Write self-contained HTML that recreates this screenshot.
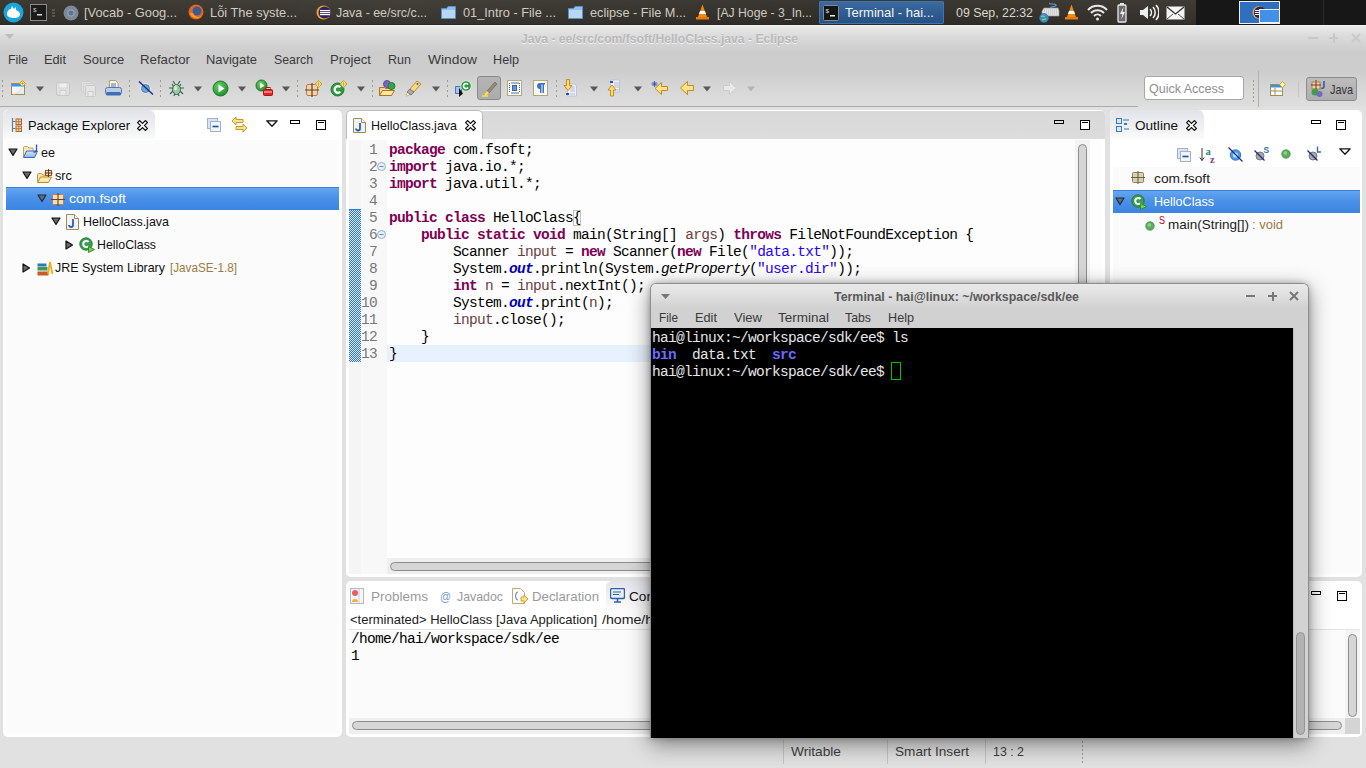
<!DOCTYPE html>
<html><head><meta charset="utf-8"><style>
html,body{margin:0;padding:0;width:1366px;height:768px;overflow:hidden;background:#e1e1e1;}
body>div,body>svg{position:absolute;}
.t{position:absolute;white-space:pre;line-height:1;transform-origin:0 0;}
</style></head><body>
<div style="left:0px;top:0px;width:1366px;height:25px;background:linear-gradient(90deg,rgba(255,255,255,0) 0%,rgba(255,255,255,0.03) 30%,rgba(0,0,0,0.05) 60%,rgba(255,255,255,0.02) 100%),linear-gradient(180deg,#3d3933 0%,#37332d 50%,#302c27 100%);"></div>
<div style="left:0px;top:24px;width:1366px;height:1px;background:#2a2824;"></div>
<div style="left:1196px;top:0px;width:170px;height:25px;background:#171717;"></div>
<div style="left:1323px;top:0px;width:1px;height:25px;background:#2a2a2a;"></div>
<div style="left:0px;top:25px;width:1366px;height:1px;background:#f4f4f4;"></div>
<svg style="left:3px;top:2px;" width="21" height="21" viewBox="0 0 21 21"><circle cx="10.5" cy="10.5" r="10" fill="#19a6dc"/><path d="M4 12c0-3 2-5 4-5l1-3 2 3 2-2 0 3c2 1 4 2 4 4 0 3-3 4-6 4s-7-1-7-4z" fill="#fff"/></svg>
<svg style="left:30px;top:4px;" width="17" height="17" viewBox="0 0 17 17"><rect x="0.5" y="0.5" width="16" height="16" fill="#1b1b1b" stroke="#8a8a8a"/><text x="3" y="8" font-size="6" fill="#ddd" font-family="Liberation Mono">$</text><rect x="7" y="10" width="5" height="1.5" fill="#ddd"/></svg>
<div style="left:52px;top:9px;width:3px;height:2px;background:#555;"></div>
<div style="left:52px;top:12px;width:3px;height:2px;background:#555;"></div>
<div style="left:52px;top:15px;width:3px;height:2px;background:#555;"></div>
<svg style="left:63px;top:5px;" width="16" height="16" viewBox="0 0 16 16"><circle cx="8" cy="8" r="7.5" fill="#7a8a98"/><circle cx="8" cy="8" r="3.2" fill="#5a7494" stroke="#aab" stroke-width="1"/></svg>
<div class="t" style="left:84px;top:6.00px;font-family:'Liberation Sans', sans-serif;font-size:13px;font-weight:normal;font-style:normal;color:#cfcac2;transform:scaleX(0.9899);">[Vocab - Goog...</div>
<svg style="left:188px;top:4px;" width="16" height="16" viewBox="0 0 16 16"><circle cx="8" cy="8" r="7.5" fill="#e8641a"/><circle cx="9" cy="7" r="4.5" fill="#3c5a9a"/><path d="M2 9c1 5 8 7 12 3-3 2-8 1-9-3z" fill="#f7a020"/></svg>
<div class="t" style="left:210px;top:6.00px;font-family:'Liberation Sans', sans-serif;font-size:13px;font-weight:normal;font-style:normal;color:#cfcac2;transform:scaleX(0.9895);">Lỗi The syste...</div>
<svg style="left:316px;top:5px;" width="15" height="15" viewBox="0 0 15 15"><circle cx="7.5" cy="7.5" r="7" fill="#f4a22a"/><circle cx="8.5" cy="7.5" r="6" fill="#2c2266"/><rect x="4" y="5" width="10" height="1.2" fill="#fff"/><rect x="4" y="7" width="10" height="1.2" fill="#fff"/><rect x="4" y="9" width="10" height="1.2" fill="#fff"/></svg>
<div class="t" style="left:336px;top:6.00px;font-family:'Liberation Sans', sans-serif;font-size:13px;font-weight:normal;font-style:normal;color:#cfcac2;transform:scaleX(0.9541);">Java - ee/src/c...</div>
<svg style="left:441px;top:5px;" width="15" height="15" viewBox="0 0 15 15"><path d="M0.5 3.5h5l1.5-2h7.5v12h-14z" fill="#8fc0ec" stroke="#5d8fc0"/><rect x="1" y="5" width="13" height="8" fill="#b7d8f5"/></svg>
<div class="t" style="left:463px;top:6.00px;font-family:'Liberation Sans', sans-serif;font-size:13px;font-weight:normal;font-style:normal;color:#cfcac2;transform:scaleX(0.9825);">01_Intro - File ...</div>
<svg style="left:568px;top:5px;" width="15" height="15" viewBox="0 0 15 15"><path d="M0.5 3.5h5l1.5-2h7.5v12h-14z" fill="#8fc0ec" stroke="#5d8fc0"/><rect x="1" y="5" width="13" height="8" fill="#b7d8f5"/></svg>
<div class="t" style="left:590px;top:6.00px;font-family:'Liberation Sans', sans-serif;font-size:13px;font-weight:normal;font-style:normal;color:#cfcac2;transform:scaleX(0.9771);">eclipse - File M...</div>
<svg style="left:695px;top:4px;" width="15" height="16" viewBox="0 0 15 16"><path d="M7.5 0.5 L12 13 H3 Z" fill="#f28a12"/><path d="M5 7h5l1 3h-7z" fill="#fff"/><rect x="1" y="13" width="13" height="2.5" fill="#e87a0a"/></svg>
<div class="t" style="left:717px;top:6.00px;font-family:'Liberation Sans', sans-serif;font-size:13px;font-weight:normal;font-style:normal;color:#cfcac2;transform:scaleX(0.9390);">[AJ Hoge - 3_In...</div>
<div style="left:819px;top:1px;width:125px;height:23px;background:linear-gradient(180deg,#3a6ba3 0%,#2f5c90 55%,#264f80 100%);border-radius:2px;box-shadow:inset 0 0 0 1px #3f74ad;"></div>
<svg style="left:823px;top:5px;" width="16" height="16" viewBox="0 0 16 16"><rect x="0.5" y="0.5" width="15" height="15" rx="1" fill="#151515" stroke="#888"/><text x="2.5" y="7.5" font-size="6" fill="#eee" font-family="Liberation Mono">$</text><rect x="7" y="10" width="5" height="1.5" fill="#eee"/></svg>
<div class="t" style="left:845px;top:6.00px;font-family:'Liberation Sans', sans-serif;font-size:13px;font-weight:normal;font-style:normal;color:#f2f2f2;">Terminal - hai...</div>
<div class="t" style="left:956px;top:6.00px;font-family:'Liberation Sans', sans-serif;font-size:13px;font-weight:normal;font-style:normal;color:#dcd7cf;transform:scaleX(0.9510);">09 Sep, 22:32</div>
<svg style="left:1036px;top:1px;" width="24" height="23" viewBox="0 0 24 23"><path d="M6 10l2-3h14l1 3v5h-17z" fill="#e4e4e4" stroke="#9a9a9a" stroke-width="0.7"/><path d="M8 9h13M8 11h14M8 13h14" stroke="#a8a8a8" stroke-width="0.8" stroke-dasharray="1 1"/><path d="M15 7c-1-2 6-1 5-3s-8 0-6-2" stroke="#5aa0e0" stroke-width="1.1" fill="none"/><circle cx="8" cy="17" r="4.5" fill="#3a8ad0" stroke="#2a6aa0" stroke-width="0.6"/><path d="M5 15.5c1.5-1 2.5 0.5 4 -0.5M6 19c1-1 3 0 4-1.5" stroke="#8ad060" stroke-width="1.4" fill="none"/></svg>
<svg style="left:1064px;top:4px;" width="15" height="16" viewBox="0 0 15 16"><path d="M7.5 0.5 L12 13 H3 Z" fill="#f28a12"/><path d="M5 7h5l1 3h-7z" fill="#fff"/><rect x="1" y="13" width="13" height="2.5" fill="#e87a0a"/></svg>
<svg style="left:1087px;top:4px;" width="21" height="17" viewBox="0 0 21 17"><path d="M1 6a13 13 0 0 1 19 0" stroke="#e8e8e8" stroke-width="2" fill="none"/><path d="M4 9a9 9 0 0 1 13 0" stroke="#e8e8e8" stroke-width="2" fill="none"/><path d="M7 12a5 5 0 0 1 7 0" stroke="#e8e8e8" stroke-width="2" fill="none"/><circle cx="10.5" cy="15" r="1.5" fill="#e8e8e8"/></svg>
<svg style="left:1117px;top:2px;" width="10" height="21" viewBox="0 0 10 21"><rect x="1" y="3" width="8" height="17" rx="1" fill="#6a6a6a" stroke="#e8e8e8" stroke-width="1.3"/><rect x="3" y="1" width="4" height="2" fill="#e8e8e8"/><path d="M6.5 5l-3.5 7h2.5l-1.5 6 4-8h-2.5z" fill="#f2f2f2"/></svg>
<svg style="left:1139px;top:4px;" width="20" height="17" viewBox="0 0 20 17"><path d="M1 6h3l5-4v13l-5-4h-3z" fill="#eee"/><path d="M11 5a5 5 0 0 1 0 7M14 3a8 8 0 0 1 0 11M17 1a11 11 0 0 1 0 15" stroke="#eee" stroke-width="1.6" fill="none"/></svg>
<svg style="left:1166px;top:6px;" width="19" height="14" viewBox="0 0 19 14"><rect x="0.5" y="0.5" width="18" height="13" fill="#f4f4f4"/><path d="M1 1l8.5 7 8.5-7" stroke="#333" stroke-width="1.3" fill="none"/><path d="M1 13l6-5M18 13l-6-5" stroke="#555" fill="none"/></svg>
<div style="left:1239px;top:1px;width:41px;height:23px;background:#2f6fbf;border:1px solid #f0f0f0;box-sizing:border-box;"></div>
<svg style="left:1251px;top:5px;" width="14" height="15" viewBox="0 0 14 15"><circle cx="8" cy="7.5" r="6.5" fill="#f2a43a"/><circle cx="9" cy="7.5" r="6" fill="#2b2660"/><rect x="4" y="5" width="9" height="1" fill="#fff"/><rect x="4" y="7" width="9" height="1" fill="#fff"/><rect x="4" y="9" width="9" height="1" fill="#fff"/></svg>
<div style="left:1259px;top:9px;width:21px;height:14px;background:#4291e6;border:1px solid #f0f0f0;box-sizing:border-box;"></div>
<div style="left:0px;top:26px;width:1366px;height:81px;background:linear-gradient(180deg,#e9e9e9 0px,#d9d9d9 12px,#cccccc 26px,#cdcdcd 45px,#d8d8d8 65px,#dedede 80px);"></div>
<div style="left:0px;top:106px;width:1138px;height:1px;background:#ababab;"></div>
<svg style="left:5px;top:34px;" width="9" height="6" viewBox="0 0 9 6"><path d="M0 0h9l-4.5 5z" fill="#bdbdbd"/></svg>
<div class="t" style="left:521px;top:32.00px;font-family:'Liberation Sans', sans-serif;font-size:13px;font-weight:bold;font-style:normal;color:#b9b9b9;transform:scaleX(0.9350);text-shadow:0 1px 0 #f0f0f0;">Java - ee/src/com/fsoft/HelloClass.java - Eclipse</div>
<div style="left:1308px;top:37px;width:10px;height:2px;background:#c8c8c8;"></div>
<div style="left:1329px;top:37px;width:9px;height:2px;background:#c8c8c8;"></div>
<div style="left:1332.5px;top:33px;width:2px;height:10px;background:#c8c8c8;"></div>
<svg style="left:1351px;top:33px;" width="10" height="10" viewBox="0 0 10 10"><path d="M1 1l8 8M9 1l-8 8" stroke="#c8c8c8" stroke-width="2"/></svg>
<div class="t" style="left:8px;top:53.00px;font-family:'Liberation Sans', sans-serif;font-size:13px;font-weight:normal;font-style:normal;color:#3a3a3a;transform:scaleX(0.9545);">File</div>
<div class="t" style="left:44px;top:53.00px;font-family:'Liberation Sans', sans-serif;font-size:13px;font-weight:normal;font-style:normal;color:#3a3a3a;transform:scaleX(0.9819);">Edit</div>
<div class="t" style="left:83px;top:53.00px;font-family:'Liberation Sans', sans-serif;font-size:13px;font-weight:normal;font-style:normal;color:#3a3a3a;">Source</div>
<div class="t" style="left:140px;top:53.00px;font-family:'Liberation Sans', sans-serif;font-size:13px;font-weight:normal;font-style:normal;color:#3a3a3a;transform:scaleX(1.0175);">Refactor</div>
<div class="t" style="left:206px;top:53.00px;font-family:'Liberation Sans', sans-serif;font-size:13px;font-weight:normal;font-style:normal;color:#3a3a3a;transform:scaleX(0.9939);">Navigate</div>
<div class="t" style="left:274px;top:53.00px;font-family:'Liberation Sans', sans-serif;font-size:13px;font-weight:normal;font-style:normal;color:#3a3a3a;transform:scaleX(0.9465);">Search</div>
<div class="t" style="left:330px;top:53.00px;font-family:'Liberation Sans', sans-serif;font-size:13px;font-weight:normal;font-style:normal;color:#3a3a3a;transform:scaleX(1.0131);">Project</div>
<div class="t" style="left:388px;top:53.00px;font-family:'Liberation Sans', sans-serif;font-size:13px;font-weight:normal;font-style:normal;color:#3a3a3a;transform:scaleX(0.9640);">Run</div>
<div class="t" style="left:428px;top:53.00px;font-family:'Liberation Sans', sans-serif;font-size:13px;font-weight:normal;font-style:normal;color:#3a3a3a;transform:scaleX(1.0595);">Window</div>
<div class="t" style="left:493px;top:53.00px;font-family:'Liberation Sans', sans-serif;font-size:13px;font-weight:normal;font-style:normal;color:#3a3a3a;transform:scaleX(0.9720);">Help</div>
<div style="left:2px;top:80px;width:1px;height:2px;background:#a39a84;"></div>
<div style="left:2px;top:85px;width:1px;height:2px;background:#a39a84;"></div>
<div style="left:2px;top:90px;width:1px;height:2px;background:#a39a84;"></div>
<div style="left:2px;top:95px;width:1px;height:2px;background:#a39a84;"></div>
<svg style="left:10px;top:80px;" width="17" height="17" viewBox="0 0 17 17"><defs><linearGradient id="gnw" x1="0" y1="0" x2="1" y2="1"><stop offset="0" stop-color="#fff"/><stop offset="1" stop-color="#dceaf8"/></linearGradient></defs><rect x="1.5" y="3.5" width="13" height="11" fill="url(#gnw)" stroke="#a08c58"/><rect x="2" y="4" width="12" height="2.5" fill="#3f93dc"/><path d="M3 14c4 0 7-2 9-6" stroke="#f0dca0" fill="none"/><path d="M12.5 0.5l3 3-3 3-3-3z" fill="#fff3b0" stroke="#c9a028"/><path d="M12.5 1.5v4M10.5 3.5h4" stroke="#c9a028" stroke-width="0.8"/></svg>
<svg style="left:36px;top:86px;" width="8" height="6" viewBox="0 0 8 6"><path d="M0 0.5h8l-4 5z" fill="#585858"/></svg>
<svg style="left:55px;top:81px;" width="16" height="16" viewBox="0 0 16 16"><rect x="1.5" y="1.5" width="13" height="13" rx="1.5" fill="#e2e2e2" stroke="#c8c8c8"/><rect x="4" y="2" width="8" height="5" fill="#efefef" stroke="#cfcfcf" stroke-width="0.8"/><rect x="5" y="9.5" width="6" height="5" fill="#eaeaea" stroke="#c8c8c8" stroke-width="0.8"/></svg>
<svg style="left:80px;top:81px;" width="17" height="16" viewBox="0 0 17 16"><rect x="1.5" y="0.5" width="10" height="10" rx="1" fill="#e2e2e2" stroke="#cdcdcd"/><rect x="3.5" y="2.5" width="10" height="10" rx="1" fill="#e2e2e2" stroke="#cdcdcd"/><rect x="5.5" y="4.5" width="10" height="11" rx="1" fill="#e4e4e4" stroke="#c8c8c8"/><rect x="8" y="10.5" width="5" height="5" fill="#eaeaea" stroke="#c8c8c8" stroke-width="0.8"/></svg>
<svg style="left:105px;top:80px;" width="17" height="17" viewBox="0 0 17 17"><path d="M4.5 0.5h6l2.5 2.5v6h-8.5z" fill="#fffef6" stroke="#b8a060"/><path d="M6 4h5M6 6h5" stroke="#4a6ea8"/><rect x="0.5" y="7.5" width="16" height="7" rx="2" fill="#b9cde6" stroke="#4f78b8"/><rect x="1" y="12" width="15" height="3.5" rx="1.5" fill="#3f6fb8"/></svg>
<div style="left:129px;top:80px;width:1px;height:2px;background:#a39a84;"></div>
<div style="left:129px;top:85px;width:1px;height:2px;background:#a39a84;"></div>
<div style="left:129px;top:90px;width:1px;height:2px;background:#a39a84;"></div>
<div style="left:129px;top:95px;width:1px;height:2px;background:#a39a84;"></div>
<svg style="left:138px;top:81px;" width="16" height="15" viewBox="0 0 16 15"><circle cx="7.5" cy="7.5" r="5" fill="#fff"/><circle cx="7.5" cy="7.5" r="4" fill="#6ea7d6" stroke="#3f78b0"/><path d="M1 0.5l14 13" stroke="#1a2a8a" stroke-width="1.4"/></svg>
<div style="left:160px;top:80px;width:1px;height:2px;background:#a39a84;"></div>
<div style="left:160px;top:85px;width:1px;height:2px;background:#a39a84;"></div>
<div style="left:160px;top:90px;width:1px;height:2px;background:#a39a84;"></div>
<div style="left:160px;top:95px;width:1px;height:2px;background:#a39a84;"></div>
<svg style="left:168px;top:80px;" width="17" height="17" viewBox="0 0 17 17"><g stroke="#2f5f5a" stroke-width="1.1" fill="none"><path d="M4 4l2 3M13 4l-2 3M1 8h4M16 8h-4M2 14l3-3M15 14l-3-3M6 16l1-3M11 16l-1-3M5 1l2 3M12 1l-2 3"/></g><ellipse cx="8.5" cy="9.5" rx="4" ry="5" fill="#9bc79a" stroke="#2f6a60"/><ellipse cx="7.5" cy="8" rx="1.5" ry="2.5" fill="#d8ecd0"/></svg>
<svg style="left:194px;top:86px;" width="8" height="6" viewBox="0 0 8 6"><path d="M0 0.5h8l-4 5z" fill="#585858"/></svg>
<svg style="left:212px;top:80px;" width="17" height="17" viewBox="0 0 17 17"><defs><radialGradient id="grn" cx="0.4" cy="0.35" r="0.7"><stop offset="0" stop-color="#6cd06c"/><stop offset="1" stop-color="#1f8a2a"/></radialGradient></defs><circle cx="8.5" cy="8.5" r="7.5" fill="url(#grn)" stroke="#1d7a26"/><path d="M6.5 4.5v8l6-4z" fill="#fff"/></svg>
<svg style="left:238px;top:86px;" width="8" height="6" viewBox="0 0 8 6"><path d="M0 0.5h8l-4 5z" fill="#585858"/></svg>
<svg style="left:255px;top:79px;" width="19" height="18" viewBox="0 0 19 18"><circle cx="6.5" cy="6.5" r="5.5" fill="url(#grn)" stroke="#1d7a26"/><path d="M5 3.5v6l4.5-3z" fill="#fff"/><rect x="8.5" y="10.5" width="9" height="6" rx="1" fill="#e0262a" stroke="#b01010"/><rect x="11" y="8.5" width="4" height="2" fill="none" stroke="#b01010"/><path d="M9 13h8" stroke="#fff" stroke-width="0.8"/></svg>
<svg style="left:282px;top:86px;" width="8" height="6" viewBox="0 0 8 6"><path d="M0 0.5h8l-4 5z" fill="#585858"/></svg>
<div style="left:297px;top:80px;width:1px;height:2px;background:#a39a84;"></div>
<div style="left:297px;top:85px;width:1px;height:2px;background:#a39a84;"></div>
<div style="left:297px;top:90px;width:1px;height:2px;background:#a39a84;"></div>
<div style="left:297px;top:95px;width:1px;height:2px;background:#a39a84;"></div>
<svg style="left:305px;top:80px;" width="18" height="17" viewBox="0 0 18 17"><rect x="1.5" y="4.5" width="11" height="11" rx="1.5" fill="#f1d2aa" stroke="#b87d4f"/><path d="M7 3v14M0 10h14" stroke="#6c3e22" stroke-width="1.2"/><path d="M13.5 0.5l3.5 3.5-3.5 3.5-3.5-3.5z" fill="#fff3b0" stroke="#c9a028"/><path d="M13.5 1.5v5M11 4h5" stroke="#c9a028" stroke-width="0.8"/></svg>
<svg style="left:330px;top:80px;" width="18" height="17" viewBox="0 0 18 17"><circle cx="7.5" cy="9.5" r="6.5" fill="#2f9a44" stroke="#217a34"/><path d="M10.3 7.2a3.3 3.3 0 1 0 0 4.6" stroke="#fff" stroke-width="2.2" fill="none"/><path d="M13.5 0.5l3.5 3.5-3.5 3.5-3.5-3.5z" fill="#fff3b0" stroke="#c9a028"/><path d="M13.5 1.5v5M11 4h5" stroke="#c9a028" stroke-width="0.8"/></svg>
<svg style="left:357px;top:86px;" width="8" height="6" viewBox="0 0 8 6"><path d="M0 0.5h8l-4 5z" fill="#585858"/></svg>
<div style="left:372px;top:80px;width:1px;height:2px;background:#a39a84;"></div>
<div style="left:372px;top:85px;width:1px;height:2px;background:#a39a84;"></div>
<div style="left:372px;top:90px;width:1px;height:2px;background:#a39a84;"></div>
<div style="left:372px;top:95px;width:1px;height:2px;background:#a39a84;"></div>
<svg style="left:379px;top:80px;" width="18" height="17" viewBox="0 0 18 17"><path d="M0.5 7.5h5l1 1h6v7h-12z" fill="#f6d58e" stroke="#b6701c"/><path d="M0.5 15.5l3-5h12l-3 5z" fill="#fbe6a8" stroke="#b6701c"/><circle cx="8" cy="4" r="3.5" fill="#7a66c0" stroke="#5a4aa0"/><circle cx="12.5" cy="6" r="3.5" fill="#3aa04a" stroke="#2a7a38"/></svg>
<svg style="left:405px;top:80px;" width="18" height="17" viewBox="0 0 18 17"><path d="M1 16l3-6 8-9 4 3-8 9z" fill="#f8d880" stroke="#c08a28"/><path d="M2 12l4 3 3-3-4-3z" fill="#a8a8b8" stroke="#777"/><path d="M1 16l1.5-3 2 1.5z" fill="#fffbe0"/><circle cx="12.5" cy="4" r="0.9" fill="#3050a0"/></svg>
<svg style="left:432px;top:86px;" width="8" height="6" viewBox="0 0 8 6"><path d="M0 0.5h8l-4 5z" fill="#585858"/></svg>
<div style="left:447px;top:80px;width:1px;height:2px;background:#a39a84;"></div>
<div style="left:447px;top:85px;width:1px;height:2px;background:#a39a84;"></div>
<div style="left:447px;top:90px;width:1px;height:2px;background:#a39a84;"></div>
<div style="left:447px;top:95px;width:1px;height:2px;background:#a39a84;"></div>
<svg style="left:454px;top:80px;" width="18" height="18" viewBox="0 0 18 18"><path d="M1.5 6.5h6v7h-6z" fill="#a9c4ea" stroke="#4a74b8"/><circle cx="12" cy="6" r="5.2" fill="#2f9a44" stroke="#fff" stroke-width="0.6"/><path d="M14 4.5a2.5 2.5 0 1 0 0 3" stroke="#fff" stroke-width="1.6" fill="none"/><path d="M5 8v9l4-3.5z" fill="#111"/></svg>
<div style="left:477px;top:76px;width:24px;height:24px;background:linear-gradient(180deg,#b4b4b4,#acacac);border:1px solid #8a8a8a;border-radius:3px;box-sizing:border-box;"></div>
<svg style="left:481px;top:80px;" width="17" height="17" viewBox="0 0 17 17"><path d="M6 11l8-9 2 2-8 9z" fill="#8e8a78" stroke="#777060" stroke-width="0.8"/><path d="M3 14l3-3 2 2-3 3z" fill="#f2e060" stroke="#d8b830" stroke-width="0.8"/><path d="M1 16h6" stroke="#f2e060" stroke-width="1.5"/></svg>
<svg style="left:507px;top:80px;" width="16" height="17" viewBox="0 0 16 17"><rect x="0.5" y="0.5" width="14" height="15" fill="#f7fbff" stroke="#b8a878"/><path d="M4 3h8M4 13h8" stroke="#4a6ea8"/><rect x="5" y="5" width="5" height="6" fill="#3a62a6"/><path d="M6 7h3M6 9h3" stroke="#cde" stroke-width="0.8"/><path d="M2.5 3v10M12.5 3v10" stroke="#4a6ea8" stroke-dasharray="1 1"/></svg>
<svg style="left:533px;top:80px;" width="16" height="17" viewBox="0 0 16 17"><rect x="0.5" y="0.5" width="14" height="15" fill="#f7fbff" stroke="#b8a878"/><path d="M7 3h5v1.5h-1V13H9.5V4.5H8.5V13H7V9a3 3 0 0 1 0-6z" fill="#3f74b8"/></svg>
<div style="left:556px;top:80px;width:1px;height:2px;background:#a39a84;"></div>
<div style="left:556px;top:85px;width:1px;height:2px;background:#a39a84;"></div>
<div style="left:556px;top:90px;width:1px;height:2px;background:#a39a84;"></div>
<div style="left:556px;top:95px;width:1px;height:2px;background:#a39a84;"></div>
<svg style="left:563px;top:79px;" width="17" height="18" viewBox="0 0 17 18"><path d="M4.5 5h7l2 2v10h-9z" fill="#eef2fa" stroke="#b0bcd0" stroke-width="0.8"/><path d="M7 8h5M7 10h5M7 12h5M7 15h5" stroke="#aac" stroke-width="0.8"/><rect x="3" y="14" width="3" height="2" fill="#2f4f9a"/><path d="M3.5 0.5h3v6h2.5l-4 5-4-5h2.5z" fill="#ffdf7a" stroke="#c88a18"/></svg>
<svg style="left:590px;top:86px;" width="8" height="6" viewBox="0 0 8 6"><path d="M0 0.5h8l-4 5z" fill="#585858"/></svg>
<svg style="left:607px;top:79px;" width="17" height="18" viewBox="0 0 17 18"><path d="M3.5 1h9v12h-9z" fill="#eef2fa" stroke="#b0bcd0" stroke-width="0.8"/><path d="M7 4h5M7 6h5M7 8h5M7 11h5" stroke="#aac" stroke-width="0.8"/><rect x="3" y="2" width="3" height="2" fill="#2f4f9a"/><path d="M3.5 17v-6h-2.5l4-5 4 5h-2.5v6z" fill="#ffdf7a" stroke="#c88a18"/></svg>
<svg style="left:634px;top:86px;" width="8" height="6" viewBox="0 0 8 6"><path d="M0 0.5h8l-4 5z" fill="#585858"/></svg>
<svg style="left:651px;top:80px;" width="18" height="16" viewBox="0 0 18 16"><path d="M16.5 6.5h-6v-4l-6.5 6 6.5 6v-4h6z" fill="#ffe38a" stroke="#c88a18"/><path d="M3.5 1v6M0.5 4h6M1.5 2l4 4M5.5 2l-4 4" stroke="#2f56a8" stroke-width="0.9"/></svg>
<svg style="left:678px;top:80px;" width="17" height="16" viewBox="0 0 17 16"><path d="M15.5 5.5h-6v-4l-7 6.5 7 6.5v-4h6z" fill="#ffe38a" stroke="#c88a18"/></svg>
<svg style="left:703px;top:86px;" width="8" height="6" viewBox="0 0 8 6"><path d="M0 0.5h8l-4 5z" fill="#585858"/></svg>
<svg style="left:722px;top:80px;" width="17" height="16" viewBox="0 0 17 16"><path d="M1.5 5.5h6v-4l7 6.5-7 6.5v-4h-6z" fill="#e9e9e9" stroke="#cdcdcd"/></svg>
<svg style="left:747px;top:86px;" width="8" height="6" viewBox="0 0 8 6"><path d="M0 0.5h8l-4 5z" fill="#b4b4b4"/></svg>
<svg style="left:1269px;top:81px;" width="17" height="16" viewBox="0 0 17 16"><rect x="1.5" y="3.5" width="12" height="11" fill="#fff" stroke="#a08c58"/><rect x="2" y="4" width="11" height="2.5" fill="#3f93dc"/><path d="M6 7v7M2 10h11" stroke="#a08c58"/><path d="M13.5 0.5l3 3-3 3-3-3z" fill="#fff3b0" stroke="#c9a028"/></svg>
<div style="left:1144px;top:76px;width:100px;height:24px;background:#fff;border:1px solid #a7a7a7;border-radius:3px;box-sizing:border-box;"></div>
<div class="t" style="left:1149px;top:82.00px;font-family:'Liberation Sans', sans-serif;font-size:13px;font-weight:normal;font-style:normal;color:#8e8e8e;transform:scaleX(0.9612);">Quick Access</div>
<div style="left:1253px;top:80px;width:1px;height:2px;background:#a39d8e;"></div>
<div style="left:1253px;top:84px;width:1px;height:2px;background:#a39d8e;"></div>
<div style="left:1253px;top:88px;width:1px;height:2px;background:#a39d8e;"></div>
<div style="left:1253px;top:92px;width:1px;height:2px;background:#a39d8e;"></div>
<div style="left:1253px;top:96px;width:1px;height:2px;background:#a39d8e;"></div>
<div style="left:1253px;top:100px;width:1px;height:2px;background:#a39d8e;"></div>
<div style="left:1258px;top:71px;width:1px;height:36px;background:#b0b0b0;"></div>
<div style="left:1298px;top:81px;width:1px;height:16px;background:#c4c4c4;"></div>
<div style="left:1306px;top:77px;width:51px;height:24px;background:linear-gradient(180deg,#bdbdbd,#aeaeae);border:1px solid #8c8c8c;border-radius:3px;box-sizing:border-box;"></div>
<div class="t" style="left:1330px;top:83.00px;font-family:'Liberation Sans', sans-serif;font-size:13px;font-weight:normal;font-style:normal;color:#333;transform:scaleX(0.8373);">Java</div>
<svg style="left:1310px;top:80px;" width="17" height="18" viewBox="0 0 17 18"><rect x="2" y="2" width="8" height="7" fill="#f1d2aa" stroke="#b87d4f"/><path d="M6 0v10M1 5h10" stroke="#6c3e22"/><circle cx="5" cy="12" r="3.5" fill="#3aa04a"/><circle cx="9.5" cy="14" r="3" fill="#7a66c0"/><path d="M14 1v6a2 2 0 0 1-3 1" stroke="#2f56a8" stroke-width="1.5" fill="none"/></svg>
<div style="left:3px;top:110px;width:339px;height:627px;background:#fff;border-radius:5px;"></div>
<div style="left:3px;top:110px;width:152px;height:29px;background:linear-gradient(180deg,#e2e4ea 0%,#eceef2 50%,#fbfbfb 100%);border-radius:6px 6px 0 0;"></div>
<div style="left:6px;top:140px;width:333px;height:594px;background:#fbfbfb;"></div>
<div class="t" style="left:28px;top:119.00px;font-family:'Liberation Sans', sans-serif;font-size:13px;font-weight:normal;font-style:normal;color:#111;transform:scaleX(0.9939);">Package Explorer</div>
<div style="left:346px;top:110px;width:759px;height:467px;background:#fff;border-radius:5px;"></div>
<div style="left:346px;top:110px;width:759px;height:29px;background:linear-gradient(180deg,#fff 0,#fff 1px,#d9d9d9 1px,#dcdcdc 100%);border-radius:5px 5px 0 0;"></div>
<div style="left:346px;top:110px;width:137px;height:29px;background:#fff;border:1px solid #bdbdbd;border-bottom:none;border-radius:5px 5px 0 0;box-sizing:border-box;"></div>
<div style="left:349px;top:140px;width:753px;height:434px;background:#fdfdfd;"></div>
<div class="t" style="left:371px;top:119.00px;font-family:'Liberation Sans', sans-serif;font-size:13px;font-weight:normal;font-style:normal;color:#111;transform:scaleX(0.9599);">HelloClass.java</div>
<div style="left:1110px;top:110px;width:252px;height:467px;background:#fff;border-radius:5px;"></div>
<div style="left:1110px;top:110px;width:94px;height:29px;background:linear-gradient(180deg,#e2e4ea 0%,#eceef2 50%,#fbfbfb 100%);border-radius:6px 6px 0 0;"></div>
<div style="left:1113px;top:167px;width:247px;height:407px;background:#fbfbfb;"></div>
<div class="t" style="left:1135px;top:119.00px;font-family:'Liberation Sans', sans-serif;font-size:13px;font-weight:normal;font-style:normal;color:#111;transform:scaleX(1.0436);">Outline</div>
<div style="left:346px;top:581px;width:1016px;height:156px;background:#fff;border-radius:5px;"></div>
<div style="left:349px;top:629px;width:1011px;height:1px;background:#e4e4e4;"></div>
<div style="left:349px;top:630px;width:1011px;height:104px;background:#fbfbfb;"></div>
<div style="left:349px;top:140px;width:12px;height:434px;background:#f5f5f5;"></div>
<div style="left:361px;top:140px;width:26px;height:434px;background:#f8f8f8;"></div>
<div style="left:349px;top:209px;width:12px;height:153px;background:repeating-conic-gradient(#1e7ae0 0 25%,#ebe6e0 0 50%) 0 0/2px 2px;"></div>
<div style="left:349px;top:209px;width:12px;height:1px;background:#1e7ae0;"></div>
<div style="left:387px;top:345px;width:686px;height:17px;background:#e8f2fe;"></div>
<div class="t" style="left:369px;top:142.89px;font-family:'Liberation Mono', monospace;font-size:14.5px;font-weight:normal;font-style:normal;color:#787878;letter-spacing:-0.7px;">1</div>
<div class="t" style="left:389px;top:142.89px;font-family:'Liberation Mono', monospace;font-size:14.5px;font-weight:normal;font-style:normal;color:#000;letter-spacing:-0.7px;"><b style="color:#7f0055">package</b> com.fsoft;</div>
<div class="t" style="left:369px;top:159.89px;font-family:'Liberation Mono', monospace;font-size:14.5px;font-weight:normal;font-style:normal;color:#787878;letter-spacing:-0.7px;">2</div>
<div class="t" style="left:389px;top:159.89px;font-family:'Liberation Mono', monospace;font-size:14.5px;font-weight:normal;font-style:normal;color:#000;letter-spacing:-0.7px;"><b style="color:#7f0055">import</b> java.io.*;</div>
<div class="t" style="left:369px;top:176.89px;font-family:'Liberation Mono', monospace;font-size:14.5px;font-weight:normal;font-style:normal;color:#787878;letter-spacing:-0.7px;">3</div>
<div class="t" style="left:389px;top:176.89px;font-family:'Liberation Mono', monospace;font-size:14.5px;font-weight:normal;font-style:normal;color:#000;letter-spacing:-0.7px;"><b style="color:#7f0055">import</b> java.util.*;</div>
<div class="t" style="left:369px;top:193.89px;font-family:'Liberation Mono', monospace;font-size:14.5px;font-weight:normal;font-style:normal;color:#787878;letter-spacing:-0.7px;">4</div>
<div class="t" style="left:369px;top:210.89px;font-family:'Liberation Mono', monospace;font-size:14.5px;font-weight:normal;font-style:normal;color:#787878;letter-spacing:-0.7px;">5</div>
<div class="t" style="left:389px;top:210.89px;font-family:'Liberation Mono', monospace;font-size:14.5px;font-weight:normal;font-style:normal;color:#000;letter-spacing:-0.7px;"><b style="color:#7f0055">public</b> <b style="color:#7f0055">class</b> HelloClass<span style="outline:1px solid #c0c0c0;outline-offset:-1px">{</span></div>
<div class="t" style="left:369px;top:227.89px;font-family:'Liberation Mono', monospace;font-size:14.5px;font-weight:normal;font-style:normal;color:#787878;letter-spacing:-0.7px;">6</div>
<div class="t" style="left:389px;top:227.89px;font-family:'Liberation Mono', monospace;font-size:14.5px;font-weight:normal;font-style:normal;color:#000;letter-spacing:-0.7px;">    <b style="color:#7f0055">public</b> <b style="color:#7f0055">static</b> <b style="color:#7f0055">void</b> main(String[] <span style="color:#6a3e3e">args</span>) <b style="color:#7f0055">throws</b> FileNotFoundException {</div>
<div class="t" style="left:369px;top:244.89px;font-family:'Liberation Mono', monospace;font-size:14.5px;font-weight:normal;font-style:normal;color:#787878;letter-spacing:-0.7px;">7</div>
<div class="t" style="left:389px;top:244.89px;font-family:'Liberation Mono', monospace;font-size:14.5px;font-weight:normal;font-style:normal;color:#000;letter-spacing:-0.7px;">        Scanner <span style="color:#6a3e3e">input</span> = <b style="color:#7f0055">new</b> Scanner(<b style="color:#7f0055">new</b> File(<span style="color:#2a00ff">&quot;data.txt&quot;</span>));</div>
<div class="t" style="left:369px;top:261.89px;font-family:'Liberation Mono', monospace;font-size:14.5px;font-weight:normal;font-style:normal;color:#787878;letter-spacing:-0.7px;">8</div>
<div class="t" style="left:389px;top:261.89px;font-family:'Liberation Mono', monospace;font-size:14.5px;font-weight:normal;font-style:normal;color:#000;letter-spacing:-0.7px;">        System.<b style="color:#0000c0;font-style:italic">out</b>.println(System.<i>getProperty</i>(<span style="color:#2a00ff">&quot;user.dir&quot;</span>));</div>
<div class="t" style="left:369px;top:278.89px;font-family:'Liberation Mono', monospace;font-size:14.5px;font-weight:normal;font-style:normal;color:#787878;letter-spacing:-0.7px;">9</div>
<div class="t" style="left:389px;top:278.89px;font-family:'Liberation Mono', monospace;font-size:14.5px;font-weight:normal;font-style:normal;color:#000;letter-spacing:-0.7px;">        <b style="color:#7f0055">int</b> <span style="color:#6a3e3e">n</span> = <span style="color:#6a3e3e">input</span>.nextInt();</div>
<div class="t" style="left:361px;top:295.89px;font-family:'Liberation Mono', monospace;font-size:14.5px;font-weight:normal;font-style:normal;color:#787878;letter-spacing:-0.7px;">10</div>
<div class="t" style="left:389px;top:295.89px;font-family:'Liberation Mono', monospace;font-size:14.5px;font-weight:normal;font-style:normal;color:#000;letter-spacing:-0.7px;">        System.<b style="color:#0000c0;font-style:italic">out</b>.print(<span style="color:#6a3e3e">n</span>);</div>
<div class="t" style="left:361px;top:312.89px;font-family:'Liberation Mono', monospace;font-size:14.5px;font-weight:normal;font-style:normal;color:#787878;letter-spacing:-0.7px;">11</div>
<div class="t" style="left:389px;top:312.89px;font-family:'Liberation Mono', monospace;font-size:14.5px;font-weight:normal;font-style:normal;color:#000;letter-spacing:-0.7px;">        <span style="color:#6a3e3e">input</span>.close();</div>
<div class="t" style="left:361px;top:329.89px;font-family:'Liberation Mono', monospace;font-size:14.5px;font-weight:normal;font-style:normal;color:#787878;letter-spacing:-0.7px;">12</div>
<div class="t" style="left:389px;top:329.89px;font-family:'Liberation Mono', monospace;font-size:14.5px;font-weight:normal;font-style:normal;color:#000;letter-spacing:-0.7px;">    }</div>
<div class="t" style="left:361px;top:346.89px;font-family:'Liberation Mono', monospace;font-size:14.5px;font-weight:normal;font-style:normal;color:#787878;letter-spacing:-0.7px;">13</div>
<div class="t" style="left:389px;top:346.89px;font-family:'Liberation Mono', monospace;font-size:14.5px;font-weight:normal;font-style:normal;color:#000;letter-spacing:-0.7px;">}</div>
<svg style="left:377px;top:162px;" width="9" height="9" viewBox="0 0 9 9"><circle cx="4.5" cy="4.5" r="4" fill="#e6eef6" stroke="#9ab0c6"/><rect x="2.5" y="4" width="4" height="1" fill="#6f8aa6"/></svg>
<svg style="left:377px;top:230px;" width="9" height="9" viewBox="0 0 9 9"><circle cx="4.5" cy="4.5" r="4" fill="#e6eef6" stroke="#9ab0c6"/><rect x="2.5" y="4" width="4" height="1" fill="#6f8aa6"/></svg>
<div style="left:1075px;top:140px;width:15px;height:418px;background:#f4f4f4;"></div>
<div style="left:1078px;top:144px;width:9px;height:400px;background:#d6d6d6;border:1px solid #8d8d8d;border-radius:5px;box-sizing:border-box;"></div>
<div style="left:387px;top:558px;width:688px;height:16px;background:#efefef;"></div>
<div style="left:390px;top:562px;width:680px;height:9px;background:#d6d6d6;border:1px solid #8d8d8d;border-radius:5px;box-sizing:border-box;"></div>
<div style="left:6px;top:187px;width:333px;height:23px;background:linear-gradient(180deg,#63a5f0 0%,#4a91e8 45%,#3b84e0 100%);border-top:1px solid #3a7fd8;box-sizing:border-box;"></div>
<svg style="left:8px;top:148px;" width="10" height="9" viewBox="0 0 10 9"><path d="M1 1h8l-4 6.5z" fill="#6a6a6a" stroke="#111" stroke-width="1.2" stroke-linejoin="round"/></svg>
<div class="t" style="left:41px;top:146.00px;font-family:'Liberation Sans', sans-serif;font-size:13px;font-weight:normal;font-style:normal;color:#111;transform:scaleX(0.9676);">ee</div>
<svg style="left:22px;top:171px;" width="10" height="9" viewBox="0 0 10 9"><path d="M1 1h8l-4 6.5z" fill="#6a6a6a" stroke="#111" stroke-width="1.2" stroke-linejoin="round"/></svg>
<div class="t" style="left:55px;top:169.00px;font-family:'Liberation Sans', sans-serif;font-size:13px;font-weight:normal;font-style:normal;color:#111;transform:scaleX(0.9802);">src</div>
<svg style="left:37px;top:194px;" width="10" height="9" viewBox="0 0 10 9"><path d="M1 1h8l-4 6.5z" fill="#6a6a6a" stroke="#1d2b44" stroke-width="1.2" stroke-linejoin="round"/></svg>
<div class="t" style="left:69px;top:192.00px;font-family:'Liberation Sans', sans-serif;font-size:13px;font-weight:normal;font-style:normal;color:#fff;transform:scaleX(1.0806);">com.fsoft</div>
<svg style="left:51px;top:217px;" width="10" height="9" viewBox="0 0 10 9"><path d="M1 1h8l-4 6.5z" fill="#6a6a6a" stroke="#111" stroke-width="1.2" stroke-linejoin="round"/></svg>
<div class="t" style="left:83px;top:215.00px;font-family:'Liberation Sans', sans-serif;font-size:13px;font-weight:normal;font-style:normal;color:#111;transform:scaleX(0.9599);">HelloClass.java</div>
<svg style="left:65px;top:240px;" width="9" height="10" viewBox="0 0 9 10"><path d="M1 1v8l6.5-4z" fill="#6a6a6a" stroke="#111" stroke-width="1.2" stroke-linejoin="round"/></svg>
<div class="t" style="left:97px;top:238.00px;font-family:'Liberation Sans', sans-serif;font-size:13px;font-weight:normal;font-style:normal;color:#111;transform:scaleX(0.9495);">HelloClass</div>
<svg style="left:22px;top:263px;" width="9" height="10" viewBox="0 0 9 10"><path d="M1 1v8l6.5-4z" fill="#6a6a6a" stroke="#111" stroke-width="1.2" stroke-linejoin="round"/></svg>
<div class="t" style="left:55px;top:261.00px;font-family:'Liberation Sans', sans-serif;font-size:13px;font-weight:normal;font-style:normal;color:#111;transform:scaleX(0.9576);">JRE System Library</div>
<div class="t" style="left:170px;top:261.00px;font-family:'Liberation Sans', sans-serif;font-size:13px;font-weight:normal;font-style:normal;color:#9a7b45;transform:scaleX(0.9001);">[JavaSE-1.8]</div>
<div style="left:1113px;top:190px;width:247px;height:23px;background:linear-gradient(180deg,#63a5f0 0%,#4a91e8 45%,#3b84e0 100%);border-top:1px solid #3a7fd8;box-sizing:border-box;"></div>
<div class="t" style="left:1154px;top:172.00px;font-family:'Liberation Sans', sans-serif;font-size:13px;font-weight:normal;font-style:normal;color:#222;transform:scaleX(1.0616);">com.fsoft</div>
<svg style="left:1115px;top:197px;" width="10" height="9" viewBox="0 0 10 9"><path d="M1 1h8l-4 6.5z" fill="#6a6a6a" stroke="#1d2b44" stroke-width="1.2" stroke-linejoin="round"/></svg>
<div class="t" style="left:1154px;top:195.00px;font-family:'Liberation Sans', sans-serif;font-size:13px;font-weight:normal;font-style:normal;color:#fff;transform:scaleX(0.9656);">HelloClass</div>
<div class="t" style="left:1159px;top:215.53px;font-family:'Liberation Sans', sans-serif;font-size:10px;font-weight:normal;font-style:normal;color:#c4001a;transform:scaleX(0.8993);">S</div>
<div class="t" style="left:1168px;top:218.00px;font-family:'Liberation Sans', sans-serif;font-size:13px;font-weight:normal;font-style:normal;color:#222;transform:scaleX(1.0380);">main(String[])</div>
<div class="t" style="left:1252px;top:218.00px;font-family:'Liberation Sans', sans-serif;font-size:13px;font-weight:normal;font-style:normal;color:#9a7b45;">: void</div>
<div style="left:606px;top:581px;width:50px;height:48px;background:linear-gradient(180deg,#e3e5eb 0%,#fbfbfb 60%);border-radius:6px 0 0 0;"></div>
<div class="t" style="left:371px;top:590.00px;font-family:'Liberation Sans', sans-serif;font-size:13px;font-weight:normal;font-style:normal;color:#9a9a9a;transform:scaleX(1.0378);">Problems</div>
<div class="t" style="left:440px;top:590.84px;font-family:'Liberation Sans', sans-serif;font-size:12px;font-weight:normal;font-style:normal;color:#7a9cc8;transform:scaleX(0.9026);">@</div>
<div class="t" style="left:457px;top:590.00px;font-family:'Liberation Sans', sans-serif;font-size:13px;font-weight:normal;font-style:normal;color:#9a9a9a;transform:scaleX(0.9500);">Javadoc</div>
<div class="t" style="left:532px;top:590.00px;font-family:'Liberation Sans', sans-serif;font-size:13px;font-weight:normal;font-style:normal;color:#9a9a9a;transform:scaleX(1.0188);">Declaration</div>
<div class="t" style="left:629px;top:590.00px;font-family:'Liberation Sans', sans-serif;font-size:13px;font-weight:normal;font-style:normal;color:#111;transform:scaleX(1.0481);">Console</div>
<div class="t" style="left:350px;top:613.00px;font-family:'Liberation Sans', sans-serif;font-size:13px;font-weight:normal;font-style:normal;color:#222;">&lt;terminated&gt; HelloClass [Java Application]</div>
<div class="t" style="left:602px;top:613.00px;font-family:'Liberation Sans', sans-serif;font-size:13px;font-weight:normal;font-style:normal;color:#222;transform:scaleX(1.0895);">/home/hai/jdk1.8.0_101/bin/java</div>
<div class="t" style="left:351px;top:631.89px;font-family:'Liberation Mono', monospace;font-size:14.5px;font-weight:normal;font-style:normal;color:#000;letter-spacing:-0.7px;">/home/hai/workspace/sdk/ee</div>
<div class="t" style="left:351px;top:648.89px;font-family:'Liberation Mono', monospace;font-size:14.5px;font-weight:normal;font-style:normal;color:#000;letter-spacing:-0.7px;">1</div>
<div style="left:1311px;top:591px;width:10px;height:4px;border:1px solid #000;box-sizing:border-box;"></div>
<div style="left:1337px;top:591px;width:10px;height:10px;border:1px solid #000;box-sizing:border-box;"></div>
<div style="left:1339px;top:593px;width:6px;height:1px;background:#000;"></div>
<div style="left:1345px;top:630px;width:15px;height:88px;background:#f4f4f4;"></div>
<div style="left:1348px;top:634px;width:9px;height:83px;background:#d6d6d6;border:1px solid #8d8d8d;border-radius:5px;box-sizing:border-box;"></div>
<div style="left:349px;top:718px;width:996px;height:16px;background:#efefef;"></div>
<div style="left:352px;top:721px;width:990px;height:9px;background:#d6d6d6;border:1px solid #8d8d8d;border-radius:5px;box-sizing:border-box;"></div>
<div style="left:1345px;top:718px;width:15px;height:16px;background:#d4d4d4;"></div>
<div style="left:783px;top:740px;width:1px;height:24px;background:#c4c4c4;"></div>
<div style="left:887px;top:740px;width:1px;height:24px;background:#c4c4c4;"></div>
<div style="left:985px;top:740px;width:1px;height:24px;background:#c4c4c4;"></div>
<div style="left:1082px;top:741px;width:1px;height:2px;background:#a39d8e;"></div>
<div style="left:1082px;top:745px;width:1px;height:2px;background:#a39d8e;"></div>
<div style="left:1082px;top:749px;width:1px;height:2px;background:#a39d8e;"></div>
<div style="left:1082px;top:753px;width:1px;height:2px;background:#a39d8e;"></div>
<div style="left:1082px;top:757px;width:1px;height:2px;background:#a39d8e;"></div>
<div style="left:1082px;top:761px;width:1px;height:2px;background:#a39d8e;"></div>
<div class="t" style="left:791px;top:745.00px;font-family:'Liberation Sans', sans-serif;font-size:13px;font-weight:normal;font-style:normal;color:#3e3e3e;transform:scaleX(1.0537);">Writable</div>
<div class="t" style="left:895px;top:745.00px;font-family:'Liberation Sans', sans-serif;font-size:13px;font-weight:normal;font-style:normal;color:#3e3e3e;transform:scaleX(1.0452);">Smart Insert</div>
<div class="t" style="left:993px;top:745.00px;font-family:'Liberation Sans', sans-serif;font-size:13px;font-weight:normal;font-style:normal;color:#3e3e3e;transform:scaleX(0.9529);">13 : 2</div>
<div style="left:650px;top:283px;width:659px;height:455px;box-shadow:0 6px 22px rgba(0,0,0,0.45),0 0 6px rgba(0,0,0,0.25);border-radius:6px 6px 0 0;"></div>
<div style="left:650px;top:283px;width:659px;height:455px;background:#d1d1d1;border:1px solid #8e8e8e;border-bottom:none;border-radius:6px 6px 0 0;box-sizing:border-box;"></div>
<div style="left:651px;top:284px;width:657px;height:22px;background:linear-gradient(180deg,#e9e9e9 0%,#dedede 60%,#d3d3d3 100%);border-radius:5px 5px 0 0;"></div>
<svg style="left:661px;top:294px;" width="9" height="6" viewBox="0 0 9 6"><path d="M0 0h9l-4.5 5z" fill="#777"/></svg>
<div class="t" style="left:834px;top:290.00px;font-family:'Liberation Sans', sans-serif;font-size:13px;font-weight:bold;font-style:normal;color:#5a5a5a;transform:scaleX(0.9533);">Terminal - hai@linux: ~/workspace/sdk/ee</div>
<div style="left:1246px;top:295px;width:9px;height:2px;background:#777;"></div>
<div style="left:1268px;top:295px;width:9px;height:2px;background:#777;"></div>
<div style="left:1271.5px;top:291.5px;width:2px;height:9px;background:#777;"></div>
<svg style="left:1289px;top:291px;" width="10" height="10" viewBox="0 0 10 10"><path d="M1 1l8 8M9 1l-8 8" stroke="#777" stroke-width="2"/></svg>
<div class="t" style="left:659px;top:311.00px;font-family:'Liberation Sans', sans-serif;font-size:13px;font-weight:normal;font-style:normal;color:#3a3a3a;transform:scaleX(0.9068);">File</div>
<div class="t" style="left:695px;top:311.00px;font-family:'Liberation Sans', sans-serif;font-size:13px;font-weight:normal;font-style:normal;color:#3a3a3a;transform:scaleX(0.9819);">Edit</div>
<div class="t" style="left:734px;top:311.00px;font-family:'Liberation Sans', sans-serif;font-size:13px;font-weight:normal;font-style:normal;color:#3a3a3a;">View</div>
<div class="t" style="left:778px;top:311.00px;font-family:'Liberation Sans', sans-serif;font-size:13px;font-weight:normal;font-style:normal;color:#3a3a3a;transform:scaleX(1.0382);">Terminal</div>
<div class="t" style="left:845px;top:311.00px;font-family:'Liberation Sans', sans-serif;font-size:13px;font-weight:normal;font-style:normal;color:#3a3a3a;transform:scaleX(0.9465);">Tabs</div>
<div class="t" style="left:888px;top:311.00px;font-family:'Liberation Sans', sans-serif;font-size:13px;font-weight:normal;font-style:normal;color:#3a3a3a;transform:scaleX(0.9720);">Help</div>
<div style="left:651px;top:328px;width:642px;height:410px;background:#000;"></div>
<div style="left:1293px;top:328px;width:15px;height:410px;background:#d2d2d2;border-left:1px solid #bdbdbd;box-sizing:border-box;"></div>
<div style="left:1296px;top:632px;width:9px;height:103px;background:#b2b2b2;border:1px solid #959595;border-radius:5px;box-sizing:border-box;"></div>
<div class="t" style="left:652px;top:330.89px;font-family:'Liberation Mono', monospace;font-size:14.5px;font-weight:normal;font-style:normal;color:#e6e6e6;letter-spacing:-0.7px;">hai@linux:~/workspace/sdk/ee$ ls</div>
<div class="t" style="left:652px;top:347.89px;font-family:'Liberation Mono', monospace;font-size:14.5px;font-weight:normal;font-style:normal;color:#e6e6e6;letter-spacing:-0.7px;"><b style="color:#6b6bff">bin</b>  data.txt  <b style="color:#6b6bff">src</b></div>
<div class="t" style="left:652px;top:364.89px;font-family:'Liberation Mono', monospace;font-size:14.5px;font-weight:normal;font-style:normal;color:#e6e6e6;letter-spacing:-0.7px;">hai@linux:~/workspace/sdk/ee$</div>
<div style="left:891px;top:362px;width:10px;height:18px;border:1px solid #00c000;box-sizing:border-box;"></div>
<svg style="left:11px;top:118px;" width="11" height="14" viewBox="0 0 11 14"><path d="M1.5 0v14M1.5 3.5h3M1.5 10.5h3" stroke="#6b7890" stroke-width="1.2"/><rect x="5" y="1" width="5.5" height="5.5" fill="#f6d8b0" stroke="#b0662a"/><path d="M7.75 1v5.5M5 3.75h5.5" stroke="#b0662a" stroke-width="0.8"/><rect x="5" y="8" width="5.5" height="5.5" fill="#f6d8b0" stroke="#b0662a"/><path d="M7.75 8v5.5M5 10.75h5.5" stroke="#b0662a" stroke-width="0.8"/></svg>
<svg style="left:137px;top:120px;" width="11" height="11" viewBox="0 0 11 11"><path d="M0.6 2.6L2.6 0.6L5.5 3.5L8.4 0.6L10.4 2.6L7.5 5.5L10.4 8.4L8.4 10.4L5.5 7.5L2.6 10.4L0.6 8.4L3.5 5.5Z" fill="#fff" stroke="#111" stroke-width="1.2" stroke-linejoin="miter"/></svg>
<svg style="left:207px;top:118px;" width="14" height="14" viewBox="0 0 14 14"><rect x="0.5" y="0.5" width="10" height="10" fill="#d6e4f4" stroke="#9fb4cc"/><rect x="3.5" y="3.5" width="10" height="10" fill="#eef5fc" stroke="#9fb4cc"/><path d="M5.5 8.5h6" stroke="#234f8e" stroke-width="1.6"/></svg>
<svg style="left:231px;top:116px;" width="17" height="17" viewBox="0 0 17 17"><path d="M1 5l4-4v2.5h7v3h-7v2.5z" fill="#ffe28a" stroke="#c88a18" stroke-width="0.9"/><path d="M16 12l-4-4v2.5h-7v3h7v2.5z" fill="#ffe28a" stroke="#c88a18" stroke-width="0.9"/></svg>
<svg style="left:266px;top:120px;" width="12" height="7" viewBox="0 0 12 7"><path d="M0.8 0.8h10.4l-5.2 5.4z" fill="#fff" stroke="#111" stroke-width="1.3" stroke-linejoin="round"/></svg>
<div style="left:290px;top:120px;width:10px;height:4px;border:1px solid #000;box-sizing:border-box;"></div>
<div style="left:316px;top:120px;width:10px;height:10px;border:1px solid #000;box-sizing:border-box;background:#fcfcfc;"></div>
<div style="left:318px;top:122px;width:6px;height:1px;background:#000;"></div>
<svg style="left:353px;top:118px;" width="13" height="15" viewBox="0 0 13 15"><path d="M0.5 0.5h8l4 4v10h-12z" fill="#eef2fa" stroke="#a58a4e"/><path d="M8.5 0.5v4h4" fill="#fff" stroke="#a58a4e"/><path d="M7 5v5.5a2 2 0 0 1-4 0" stroke="#2f5fa8" stroke-width="1.8" fill="none"/></svg>
<svg style="left:465px;top:120px;" width="11" height="11" viewBox="0 0 11 11"><path d="M0.6 2.6L2.6 0.6L5.5 3.5L8.4 0.6L10.4 2.6L7.5 5.5L10.4 8.4L8.4 10.4L5.5 7.5L2.6 10.4L0.6 8.4L3.5 5.5Z" fill="#fff" stroke="#111" stroke-width="1.2" stroke-linejoin="miter"/></svg>
<div style="left:1054px;top:120px;width:10px;height:4px;border:1px solid #000;box-sizing:border-box;"></div>
<div style="left:1080px;top:120px;width:10px;height:10px;border:1px solid #000;box-sizing:border-box;background:#fcfcfc;"></div>
<div style="left:1082px;top:122px;width:6px;height:1px;background:#000;"></div>
<svg style="left:1116px;top:118px;" width="14" height="14" viewBox="0 0 14 14"><rect x="0.5" y="0.5" width="5" height="5" fill="#dbe8f6" stroke="#3a78c0"/><rect x="0.5" y="8.5" width="5" height="5" fill="#dbe8f6" stroke="#3a78c0"/><path d="M7 2h6M8 6h3M8 11h5" stroke="#3a78c0" stroke-width="1.2"/><rect x="8" y="5" width="3" height="2" fill="#3a78c0"/></svg>
<svg style="left:1186px;top:120px;" width="11" height="11" viewBox="0 0 11 11"><path d="M0.6 2.6L2.6 0.6L5.5 3.5L8.4 0.6L10.4 2.6L7.5 5.5L10.4 8.4L8.4 10.4L5.5 7.5L2.6 10.4L0.6 8.4L3.5 5.5Z" fill="#fff" stroke="#111" stroke-width="1.2" stroke-linejoin="miter"/></svg>
<div style="left:1311px;top:120px;width:10px;height:4px;border:1px solid #000;box-sizing:border-box;"></div>
<div style="left:1336px;top:120px;width:10px;height:10px;border:1px solid #000;box-sizing:border-box;background:#fcfcfc;"></div>
<div style="left:1338px;top:122px;width:6px;height:1px;background:#000;"></div>
<svg style="left:1177px;top:148px;" width="14" height="14" viewBox="0 0 14 14"><rect x="0.5" y="0.5" width="10" height="10" fill="#d6e4f4" stroke="#9fb4cc"/><rect x="3.5" y="3.5" width="10" height="10" fill="#eef5fc" stroke="#9fb4cc"/><path d="M5.5 8.5h6" stroke="#234f8e" stroke-width="1.6"/></svg>
<svg style="left:1199px;top:145px;" width="20" height="19" viewBox="0 0 20 19"><path d="M3 3v12.5M0.8 12.5l2.2 3 2.2-3" stroke="#333" stroke-width="1" fill="none"/><text x="6.5" y="10" font-size="10.5" font-weight="bold" fill="#1f8a78" font-family="Liberation Serif">a</text><text x="11" y="18" font-size="10.5" font-weight="bold" fill="#8a3a9a" font-family="Liberation Serif">z</text></svg>
<svg style="left:1227px;top:146px;" width="17" height="17" viewBox="0 0 17 17"><circle cx="8.5" cy="9" r="5.2" fill="#4aa0e6" stroke="#2f78c0"/><circle cx="8.5" cy="9" r="2.6" fill="#bfe0fa"/><path d="M1.5 1.5l14 14" stroke="#1a2a8a" stroke-width="1.3"/></svg>
<svg style="left:1252px;top:145px;" width="18" height="17" viewBox="0 0 18 17"><circle cx="8" cy="11" r="4" fill="#a8a8a8" stroke="#7a7a7a"/><path d="M2.5 5.5l10 10" stroke="#1a2a8a" stroke-width="1.3"/><text x="11.5" y="8" font-size="8.5" font-weight="bold" fill="#3a6ab0" font-family="Liberation Sans">S</text></svg>
<svg style="left:1281px;top:149px;" width="10" height="10" viewBox="0 0 10 10"><circle cx="5" cy="5" r="4.2" fill="#5cb05c" stroke="#3a8a42" stroke-width="0.8"/><circle cx="4.3" cy="4" r="1.8" fill="#8ed08a"/></svg>
<svg style="left:1305px;top:145px;" width="18" height="17" viewBox="0 0 18 17"><circle cx="8" cy="11" r="4" fill="#a8a8a8" stroke="#7a7a7a"/><path d="M2.5 5.5l10 10" stroke="#1a2a8a" stroke-width="1.3"/><path d="M12.5 1.5v5.5h3.5" stroke="#3a6ab0" stroke-width="1.4" fill="none"/></svg>
<svg style="left:1339px;top:148px;" width="12" height="7" viewBox="0 0 12 7"><path d="M0.8 0.8h10.4l-5.2 5.4z" fill="#fff" stroke="#111" stroke-width="1.3" stroke-linejoin="round"/></svg>
<svg style="left:22px;top:144px;" width="17" height="15" viewBox="0 0 17 15"><defs><linearGradient id="fb" x1="0" y1="0" x2="0" y2="1"><stop offset="0" stop-color="#d8e8fa"/><stop offset="1" stop-color="#8ab4ea"/></linearGradient></defs><path d="M1.5 12.5V3.5q0-1 1-1h3l1.5 1.5h4v3" fill="#fbe9b4" stroke="#b49a5a" stroke-width="0.9"/><path d="M1.5 13.5l3-6.5h11l-3 6.5z" fill="url(#fb)" stroke="#3a68b8" stroke-width="1"/><path d="M14.5 0.5v5.5q0 2-2 2h-1" stroke="#2f56a8" stroke-width="1.3" fill="none"/></svg>
<svg style="left:36px;top:168px;" width="17" height="16" viewBox="0 0 17 16"><path d="M1.5 13.5V6.5q0-1 1-1h3l1.5 1.5h5v3" fill="#fbe3a0" stroke="#c08a30" stroke-width="0.9"/><path d="M1.5 14.5l3-5.5h11l-3 5.5z" fill="#fde9b0" stroke="#c08a30" stroke-width="1"/><rect x="9.5" y="2.5" width="6" height="5" fill="#f6d8b0" stroke="#8a4a22" stroke-width="0.9"/><path d="M12.5 1v8M8.5 5h8" stroke="#5a2a10" stroke-width="0.9"/></svg>
<svg style="left:51px;top:193px;" width="14" height="13" viewBox="0 0 14 13"><rect x="1.5" y="1.5" width="11" height="10" rx="1" fill="#f5ddb8" stroke="#b87d4f"/><path d="M7 0v13M0 6.5h14" stroke="#6c3e22" stroke-width="1.1"/></svg>
<svg style="left:66px;top:214px;" width="13" height="16" viewBox="0 0 13 16"><path d="M0.5 0.5h8l4 4v11h-12z" fill="#eef2fa" stroke="#a58a4e"/><path d="M8.5 0.5v4h4" fill="#fff" stroke="#a58a4e"/><path d="M7 5v6a2 2 0 0 1-4 0" stroke="#2f5fa8" stroke-width="1.8" fill="none"/></svg>
<svg style="left:79px;top:237px;" width="17" height="16" viewBox="0 0 17 16"><circle cx="7" cy="7" r="6.2" fill="#3a9e52" stroke="#237a36"/><path d="M9.6 4.9a3.1 3.1 0 1 0 0 4.2" stroke="#fff" stroke-width="2" fill="none"/><path d="M9.5 9.5v6l6-3z" fill="#7ad04a" stroke="#2a8a20" stroke-width="0.9"/></svg>
<svg style="left:37px;top:261px;" width="16" height="15" viewBox="0 0 16 15"><rect x="0.5" y="2.5" width="9" height="3" fill="#2a7ab8"/><rect x="0.5" y="6" width="10" height="3.5" fill="#3a9a5a"/><rect x="0.5" y="10.5" width="11" height="4" fill="#c85a2a"/><path d="M11 13l2-12 2.5 12" stroke="#e8b020" stroke-width="1.8" fill="none"/></svg>
<svg style="left:1131px;top:171px;" width="14" height="13" viewBox="0 0 14 13"><rect x="1.5" y="1.5" width="11" height="10" rx="1" fill="#d8d2b0" stroke="#8a8460"/><path d="M7 0v13M0 6.5h14" stroke="#6a6448" stroke-width="1.1"/></svg>
<svg style="left:1131px;top:194px;" width="17" height="16" viewBox="0 0 17 16"><circle cx="7" cy="7" r="6.2" fill="#3a9e52" stroke="#237a36"/><path d="M9.6 4.9a3.1 3.1 0 1 0 0 4.2" stroke="#fff" stroke-width="2" fill="none"/><path d="M9.5 9.5v6l6-3z" fill="#7ad04a" stroke="#2a8a20" stroke-width="0.9"/></svg>
<svg style="left:1145px;top:221px;" width="10" height="10" viewBox="0 0 10 10"><circle cx="5" cy="5" r="4.2" fill="#5cb05c" stroke="#3a8a42" stroke-width="0.8"/><circle cx="4.3" cy="4" r="1.8" fill="#8ed08a"/></svg>
<svg style="left:350px;top:588px;" width="16" height="16" viewBox="0 0 16 16"><rect x="0.5" y="0.5" width="13" height="15" fill="#f4f6fa" stroke="#b8b8b8"/><circle cx="5" cy="5" r="3" fill="#e86060"/><path d="M2 14a3 3 0 0 1 6 0z" fill="#f0b040"/><path d="M9 1v14" stroke="#ccd"/></svg>
<svg style="left:512px;top:588px;" width="16" height="17" viewBox="0 0 16 17"><path d="M0.5 0.5h8l4 4v11h-12z" fill="#fff" stroke="#c0a870"/><path d="M6 4q-2 0-2 2t-1 2q1 0 1 2t2 2" stroke="#4a74b8" fill="none"/><path d="M9 9h3v-2l4 4-4 4v-2h-3z" fill="#ffe28a" stroke="#c88a18" stroke-width="0.8"/></svg>
<svg style="left:610px;top:588px;" width="15" height="15" viewBox="0 0 15 15"><rect x="0.5" y="0.5" width="14" height="10" rx="1.5" fill="#e8f0fa" stroke="#2f5fa8" stroke-width="1.4"/><path d="M3 4h8M3 6.5h6" stroke="#2f5fa8"/><path d="M4 14h7M7.5 11v3" stroke="#2f5fa8" stroke-width="1.5"/></svg>
</body></html>
